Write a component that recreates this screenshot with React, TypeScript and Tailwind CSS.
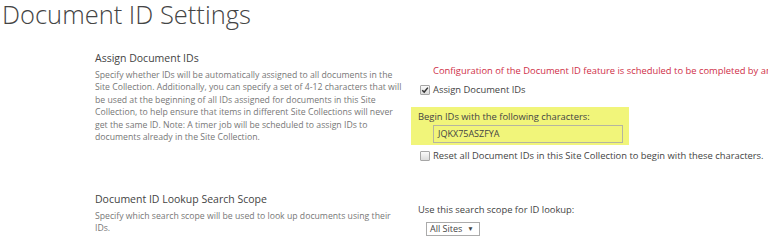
const font = { fontFamily: '"Open Sans", "Noto Sans", sans-serif' };

const assignLines = [
  "Specify whether IDs will be automatically assigned to all documents in the",
  "Site Collection. Additionally, you can specify a set of 4-12 characters that will",
  "be used at the beginning of all IDs assigned for documents in this Site",
  "Collection, to help ensure that items in different Site Collections will never",
  "get the same ID. Note: A timer job will be scheduled to assign IDs to",
  "documents already in the Site Collection.",
];

const lookupLines = [
  "Specify which search scope will be used to look up documents using their",
  "IDs.",
];

function Box({ checked }: { checked?: boolean }) {
  return (
    <span className="flex h-[10px] w-[10px] shrink-0 items-center justify-center rounded-[1px] border border-[#a6a6a6] bg-gradient-to-b from-[#fafafa] to-[#dcdcdc]">
      {checked && (
        <svg viewBox="0 0 10 10" className="h-[8px] w-[8px]">
          <path d="M1.5 5.2 L4 7.6 L8.6 2" fill="none" stroke="#333" strokeWidth="1.8" />
        </svg>
      )}
    </span>
  );
}

function Description({ lines }: { lines: string[] }) {
  return (
    <p className="mt-[4px] whitespace-nowrap text-[8.7px] leading-[12.4px] text-[#777]">
      {lines.map((line) => (
        <span key={line} className="block">
          {line}
        </span>
      ))}
    </p>
  );
}

export default function App() {
  return (
    <div className="h-[243px] w-[768px] overflow-hidden bg-white text-[#444]" style={font}>
      <h1 className="pl-[2px] text-[25.5px] font-light leading-[29px] text-[#444]">
        Document ID Settings
      </h1>

      <div className="mt-[22px] flex">
        <div className="ml-[95px] w-[300px] shrink-0">
          <h2 className="text-[10.5px] leading-[14px] text-[#444]">Assign Document IDs</h2>
          <Description lines={assignLines} />
        </div>
        <div className="ml-[16px] min-w-0 flex-1 whitespace-nowrap text-[9.4px]">
          <p className="ml-[22px] mt-[13px] leading-[14px] text-[#cf3049]">
            Configuration of the Document ID feature is scheduled to be completed by an
          </p>
          <label className="ml-[9px] mt-[5px] flex items-center gap-[3px] leading-[14px]">
            <Box checked />
            <span>Assign Document IDs</span>
          </label>
          <div className="mt-[10px] h-[38px] w-[218px] bg-[#f1f57a] pl-[7px] pt-[3px]">
            <p className="leading-[14px]">Begin IDs with the following characters:</p>
            <div className="ml-[15px] mt-[1px] flex h-[18px] w-[190px] items-center border border-[#b5b5a0] pl-[4px] text-[9px]">
              JQKX75ASZFYA
            </div>
          </div>
          <label className="ml-[9px] mt-[4px] flex items-center gap-[3px] leading-[14px]">
            <Box />
            <span>Reset all Document IDs in this Site Collection to begin with these characters.</span>
          </label>
        </div>
      </div>

      <div className="mt-[29px] flex">
        <div className="ml-[95px] w-[300px] shrink-0">
          <h2 className="text-[10.5px] leading-[14px] text-[#444]">Document ID Lookup Search Scope</h2>
          <Description lines={lookupLines} />
        </div>
        <div className="ml-[23px] min-w-0 flex-1 whitespace-nowrap text-[9.4px]">
          <p className="mt-[11px] leading-[14px]">Use this search scope for ID lookup:</p>
          <div className="ml-[8px] mt-[5px] flex h-[14px] w-[54px] items-center border border-[#ababab] pl-[3px] text-[9px]">
            All Sites
            <span className="ml-[5px] text-[6.5px]">▼</span>
          </div>
        </div>
      </div>
    </div>
  );
}
